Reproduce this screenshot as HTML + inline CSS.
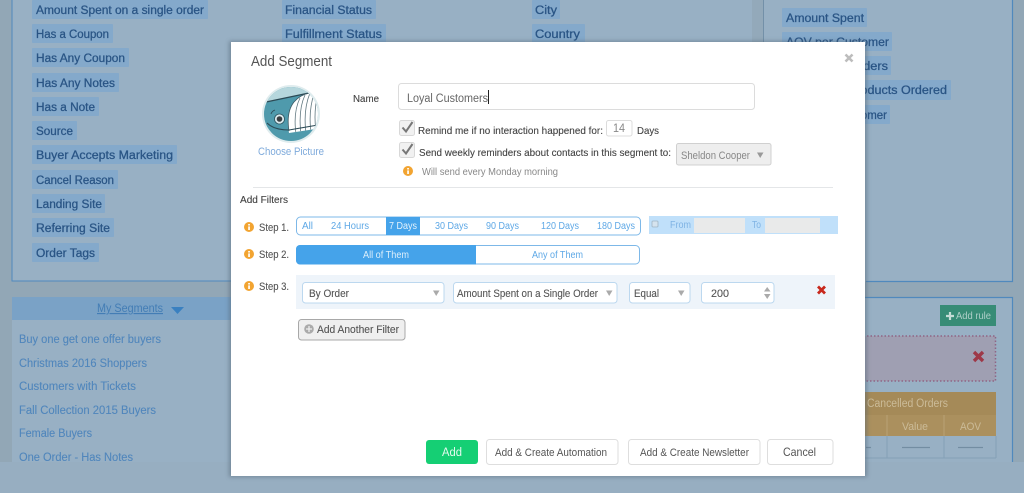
<!DOCTYPE html>
<html>
<head>
<meta charset="utf-8">
<style>
html,body{margin:0;padding:0;width:1024px;height:493px;overflow:hidden;background:#97aec1}
svg{display:block;filter:blur(.3px)}
text{font-family:"Liberation Sans",sans-serif;font-size:11px;fill:#555;white-space:pre}
.tag{fill:#84a9cb}
.tt{fill:#2a5585;font-size:11.5px;stroke:#2a5585;stroke-width:.28}
.seg{fill:#5086bc;font-size:11.500px;stroke:#5086bc;stroke-width:.1}
.b{fill:#5ea8e6;font-size:10px}
.d{fill:#444;font-size:10.5px;stroke:#444;stroke-width:.12}
.dk{fill:#555;font-size:11px;stroke:#555;stroke-width:.12}
</style>
</head>
<body>
<svg width="1024" height="493" viewBox="0 0 1024 493" xmlns="http://www.w3.org/2000/svg">
<defs>
<filter id="sh" x="-5%" y="-5%" width="110%" height="110%"><feGaussianBlur stdDeviation="2"/></filter>
<clipPath id="cc"><circle cx="291" cy="114" r="27"/></clipPath>
<clipPath id="wh"><path d="M289 133Q286 112 294 102Q300 95 309 93L322 89V128Z"/></clipPath>
<clipPath id="lst"><rect x="0" y="297" width="231" height="165"/></clipPath>
<g id="info"><circle r="5" fill="#f2a431"/><rect x="-.8" y="-.6" width="1.7" height="3.6" fill="#fff"/><rect x="-.8" y="-3" width="1.7" height="1.5" fill="#fff"/></g>
</defs>

<!-- page background -->
<rect width="1024" height="493" fill="#97aec1"/>
<rect x="0" y="0" width="1024" height="462" fill="#92a7b6"/>

<!-- top-left panel -->
<rect x="12" y="-3" width="751" height="284" fill="#98b0c4" stroke="#5089bd" stroke-width="1"/>
<!-- top-right panel -->
<rect x="763" y="-3" width="249" height="284" fill="#98b0c4"/>
<path d="M763.500 0V42" stroke="#7390a8" stroke-width="1"/>
<path d="M866 281.500H1012.500V0" fill="none" stroke="#5089bd" stroke-width="1.200"/>
<rect x="752" y="0" width="11" height="42" fill="#93a9ba"/>

<!-- left tags -->
<rect class="tag" x="32" y="0" width="176" height="19" rx="1"/><text class="tt" x="36" y="14" textLength="168" lengthAdjust="spacingAndGlyphs">Amount Spent on a single order</text>
<rect class="tag" x="32" y="24" width="81" height="19" rx="1"/><text class="tt" x="36" y="38" textLength="73" lengthAdjust="spacingAndGlyphs">Has a Coupon</text>
<rect class="tag" x="32" y="48" width="97" height="19" rx="1"/><text class="tt" x="36" y="62" textLength="89" lengthAdjust="spacingAndGlyphs">Has Any Coupon</text>
<rect class="tag" x="32" y="73" width="87" height="19" rx="1"/><text class="tt" x="36" y="87" textLength="79" lengthAdjust="spacingAndGlyphs">Has Any Notes</text>
<rect class="tag" x="32" y="97" width="67" height="19" rx="1"/><text class="tt" x="36" y="111" textLength="59" lengthAdjust="spacingAndGlyphs">Has a Note</text>
<rect class="tag" x="32" y="121" width="45" height="19" rx="1"/><text class="tt" x="36" y="135" textLength="37" lengthAdjust="spacingAndGlyphs">Source</text>
<rect class="tag" x="32" y="145" width="145" height="19" rx="1"/><text class="tt" x="36" y="159" textLength="137" lengthAdjust="spacingAndGlyphs">Buyer Accepts Marketing</text>
<rect class="tag" x="32" y="170" width="86" height="19" rx="1"/><text class="tt" x="36" y="184" textLength="78" lengthAdjust="spacingAndGlyphs">Cancel Reason</text>
<rect class="tag" x="32" y="194" width="73" height="19" rx="1"/><text class="tt" x="36" y="208" textLength="66" lengthAdjust="spacingAndGlyphs">Landing Site</text>
<rect class="tag" x="32" y="218" width="82" height="19" rx="1"/><text class="tt" x="36" y="232" textLength="74" lengthAdjust="spacingAndGlyphs">Referring Site</text>
<rect class="tag" x="32" y="243" width="67" height="19" rx="1"/><text class="tt" x="36" y="257" textLength="59" lengthAdjust="spacingAndGlyphs">Order Tags</text>

<rect class="tag" x="282" y="0" width="94" height="19" rx="1"/><text class="tt" x="285" y="14" textLength="87" lengthAdjust="spacingAndGlyphs">Financial Status</text>
<rect class="tag" x="282" y="24" width="104" height="19" rx="1"/><text class="tt" x="285" y="38" textLength="97" lengthAdjust="spacingAndGlyphs">Fulfillment Status</text>
<rect class="tag" x="532" y="0" width="28" height="19" rx="1"/><text class="tt" x="535" y="14" textLength="22" lengthAdjust="spacingAndGlyphs">City</text>
<rect class="tag" x="532" y="24" width="53" height="19" rx="1"/><text class="tt" x="535" y="38" textLength="45" lengthAdjust="spacingAndGlyphs">Country</text>

<!-- right tags -->
<rect class="tag" x="782" y="8" width="85" height="19" rx="1"/><text class="tt" x="786" y="22" textLength="78" lengthAdjust="spacingAndGlyphs">Amount Spent</text>
<rect class="tag" x="782" y="32" width="110" height="19" rx="1"/><text class="tt" x="786" y="46" textLength="103" lengthAdjust="spacingAndGlyphs">AOV per Customer</text>
<rect class="tag" x="782" y="56" width="109" height="19" rx="1"/><text class="tt" x="786" y="70" textLength="102" lengthAdjust="spacingAndGlyphs">Number of Orders</text>
<rect class="tag" x="782" y="80" width="169" height="20" rx="1"/><text class="tt" x="786" y="94" textLength="161" lengthAdjust="spacingAndGlyphs">Number of Products Ordered</text>
<rect class="tag" x="782" y="105" width="108" height="19" rx="1"/><text class="tt" x="786" y="119" textLength="101" lengthAdjust="spacingAndGlyphs">Value per Customer</text>

<!-- My Segments panel -->
<rect x="12" y="297" width="230" height="165" fill="#98b0c4"/>
<rect x="12" y="297" width="230" height="23" fill="#7aa2c6"/>
<text x="97" y="312" textLength="66" lengthAdjust="spacingAndGlyphs" style="fill:#437db5;font-size:11.500px;text-decoration:underline">My Segments</text>
<path d="M171 307H184L177.500 314Z" fill="#3a80c0"/>
<g clip-path="url(#lst)">
<text class="seg" x="19" y="343" textLength="142" lengthAdjust="spacingAndGlyphs">Buy one get one offer buyers</text>
<text class="seg" x="19" y="367" textLength="128" lengthAdjust="spacingAndGlyphs">Christmas 2016 Shoppers</text>
<text class="seg" x="19" y="390" textLength="117" lengthAdjust="spacingAndGlyphs">Customers with Tickets</text>
<text class="seg" x="19" y="414" textLength="137" lengthAdjust="spacingAndGlyphs">Fall Collection 2015 Buyers</text>
<text class="seg" x="19" y="437" textLength="73" lengthAdjust="spacingAndGlyphs">Female Buyers</text>
<text class="seg" x="19" y="461" textLength="114" lengthAdjust="spacingAndGlyphs">One Order - Has Notes</text>
</g>

<!-- bottom right panel -->
<rect x="860" y="297" width="152" height="165" fill="#98b0c4"/>
<path d="M860 297.500H1012.500V462" fill="none" stroke="#5089bd" stroke-width="1.200"/>
<rect x="940" y="305" width="56" height="21" fill="#378c76"/>
<path d="M950 312V320M946 316H954" stroke="#c5dcd6" stroke-width="2.200"/>
<text x="956" y="319" textLength="35" lengthAdjust="spacingAndGlyphs" style="fill:#aecfc8;font-size:10.500px">Add rule</text>
<rect x="860" y="336" width="135.500" height="45" fill="#9f9fb2" stroke="#8f6585" stroke-width="1.500" stroke-dasharray="1.500 2"/>
<path d="M974 352L983 361M983 352L974 361" stroke="#9e3848" stroke-width="3.400"/>
<rect x="860" y="392" width="136" height="23" fill="#a58a58"/>
<rect x="860" y="415" width="136" height="21" fill="#ab905e"/>
<rect x="860" y="436" width="136" height="22" fill="#98b0c4"/>
<path d="M887 436V458M944 436V458M996 436V458M860 458H996" stroke="#84a0b6" stroke-width="1" fill="none"/>
<path d="M887 415V436M944 415V436" stroke="#b8a277" stroke-width="1"/>
<text x="867" y="407" textLength="81" lengthAdjust="spacingAndGlyphs" style="fill:#cbbb98;font-size:11.500px">Cancelled Orders</text>
<text x="902" y="430" textLength="26" lengthAdjust="spacingAndGlyphs" style="fill:#cbbb98;font-size:11px">Value</text>
<text x="960" y="430" textLength="21" lengthAdjust="spacingAndGlyphs" style="fill:#cbbb98;font-size:11px">AOV</text>
<path d="M866 447.500H871M902 447.500H930M958 447.500H983" stroke="#738da2" stroke-width="1.300"/>

<!-- page bottom strip -->
<rect x="0" y="462" width="1024" height="31" fill="#97aec1"/>

<!-- modal -->
<rect x="229" y="41" width="638" height="436" fill="#4f6272" opacity=".5" filter="url(#sh)"/>
<rect x="231" y="42" width="634" height="434" fill="#fff"/>
<text x="251" y="66" textLength="81" lengthAdjust="spacingAndGlyphs" style="fill:#555;font-size:14.500px">Add Segment</text>
<path d="M845.500 54.500L852.500 61.500M852.500 54.500L845.500 61.500" stroke="#bdbdbd" stroke-width="2.600"/>

<!-- picture -->
<circle cx="291" cy="114" r="29" fill="#dfecee"/>
<circle cx="291" cy="114" r="27" fill="#4f9aac"/>
<g clip-path="url(#cc)">
<path d="M262 84H322V89L309 93L266 102Z" fill="#b6d7dd"/>
<path d="M289 133Q286 112 294 102Q300 95 309 93L322 89V128Z" fill="#fff"/>
<g clip-path="url(#wh)" stroke="#60777f" stroke-width=".8" fill="none">
<path d="M296 134Q293 112 300 98"/>
<path d="M301 134Q298 110 305 95"/>
<path d="M306 133Q303 110 310 93"/>
<path d="M311 132Q308 110 315 91"/>
<path d="M316 131Q313 110 319 90"/>
</g>
<path d="M266 102L309 93" stroke="#2c4a55" stroke-width="1.400" fill="none"/>
<path d="M267 123Q274 130 289 130L318 125" stroke="#2c4a55" stroke-width="1.100" fill="none"/>
<path d="M289 131Q286 112 294 102Q300 95 309 93" stroke="#3d5a64" stroke-width=".8" fill="none"/>
</g>
<circle cx="279.500" cy="119" r="5" fill="#dcebee" stroke="#2c5560" stroke-width=".8"/>
<circle cx="279.500" cy="119" r="2.800" fill="#3a3f42"/>
<path d="M271 114Q272 111 275 110" stroke="#2c4a55" stroke-width=".9" fill="none"/>
<text x="258" y="155" textLength="66" lengthAdjust="spacingAndGlyphs" style="fill:#7eaadb;font-size:11px">Choose Picture</text>

<!-- name -->
<text x="353" y="102" textLength="26" lengthAdjust="spacingAndGlyphs" class="d">Name</text>
<rect x="398.500" y="83.500" width="356" height="26" rx="3" fill="#fff" stroke="#dcdcdc"/>
<text x="407" y="102" textLength="81" lengthAdjust="spacingAndGlyphs" style="fill:#666;font-size:11.500px">Loyal Customers</text>
<rect x="488" y="90" width="1" height="14" fill="#222"/>

<!-- reminders -->
<rect x="399.500" y="120.500" width="15" height="15" rx="2" fill="#f1f1f1" stroke="#d8d8d8"/>
<path d="M402.500 127.500L406 131.500L412.500 122" stroke="#777" stroke-width="2" fill="none"/>
<text x="418" y="134" textLength="185" lengthAdjust="spacingAndGlyphs" class="d">Remind me if no interaction happened for:</text>
<rect x="606.500" y="120.500" width="25.500" height="15.500" rx="2" fill="#fff" stroke="#dcdcdc"/>
<text x="613" y="132" textLength="12" lengthAdjust="spacingAndGlyphs" style="fill:#888;font-size:11.500px">14</text>
<text x="637" y="134" textLength="22" lengthAdjust="spacingAndGlyphs" class="d">Days</text>

<rect x="399.500" y="142.500" width="15" height="15" rx="2" fill="#f1f1f1" stroke="#d8d8d8"/>
<path d="M402.500 149.500L406 153.500L412.500 144" stroke="#777" stroke-width="2" fill="none"/>
<text x="419" y="156" textLength="252" lengthAdjust="spacingAndGlyphs" class="d">Send weekly reminders about contacts in this segment to:</text>
<rect x="676.500" y="143.500" width="94.500" height="21.500" rx="2" fill="#eee" stroke="#d0d0d0"/>
<text x="681" y="159" textLength="69" lengthAdjust="spacingAndGlyphs" style="fill:#888;font-size:11px">Sheldon Cooper</text>
<path d="M757 152.500H763.500L760.200 158Z" fill="#999"/>
<use href="#info" x="408" y="171"/>
<text x="422" y="175" textLength="136" lengthAdjust="spacingAndGlyphs" style="fill:#888;font-size:10.500px">Will send every Monday morning</text>
<rect x="253" y="187" width="580" height="1" fill="#e4e6e8"/>

<text x="240" y="203" textLength="48" lengthAdjust="spacingAndGlyphs" class="d">Add Filters</text>

<!-- step 1 -->
<use href="#info" x="249" y="227"/>
<text x="259" y="231" textLength="30" lengthAdjust="spacingAndGlyphs" class="dk">Step 1.</text>
<rect x="296.500" y="217" width="344" height="18" rx="4" fill="#fff" stroke="#7db8e8"/>
<rect x="386" y="217" width="34" height="18" fill="#45a3ea"/>
<text class="b" x="302" y="229" textLength="11" lengthAdjust="spacingAndGlyphs">All</text>
<text class="b" x="331" y="229" textLength="38" lengthAdjust="spacingAndGlyphs">24 Hours</text>
<text class="b" x="389" y="229" textLength="28" lengthAdjust="spacingAndGlyphs" style="fill:#e4f2fc">7 Days</text>
<text class="b" x="435" y="229" textLength="33" lengthAdjust="spacingAndGlyphs">30 Days</text>
<text class="b" x="486" y="229" textLength="33" lengthAdjust="spacingAndGlyphs">90 Days</text>
<text class="b" x="541" y="229" textLength="38" lengthAdjust="spacingAndGlyphs">120 Days</text>
<text class="b" x="597" y="229" textLength="38" lengthAdjust="spacingAndGlyphs">180 Days</text>
<rect x="649" y="216" width="189" height="18" fill="#c0e0fa"/>
<rect x="652" y="221" width="6" height="6" rx="1" fill="#d5e3ee" stroke="#9fb4c4" stroke-width=".8"/>
<text x="670" y="228" textLength="21" lengthAdjust="spacingAndGlyphs" style="fill:#7fb3e4;font-size:10px">From</text>
<rect x="694" y="218" width="51" height="15" fill="#e9eaea"/>
<text x="752" y="228" textLength="9" lengthAdjust="spacingAndGlyphs" style="fill:#7fb3e4;font-size:10px">To</text>
<rect x="765" y="218" width="55" height="15" fill="#e9eaea"/>

<!-- step 2 -->
<use href="#info" x="249" y="254"/>
<text x="259" y="258" textLength="30" lengthAdjust="spacingAndGlyphs" class="dk">Step 2.</text>
<rect x="296.500" y="245.500" width="343" height="18.500" rx="4" fill="#fff" stroke="#7db8e8"/>
<path d="M476 245H300a4 4 0 0 0-4 4V260.500a4 4 0 0 0 4 4H476Z" fill="#45a3ea"/>
<text x="363" y="258" textLength="46" lengthAdjust="spacingAndGlyphs" style="fill:#dceefb;font-size:10px">All of Them</text>
<text class="b" x="532" y="258" textLength="51" lengthAdjust="spacingAndGlyphs">Any of Them</text>

<!-- step 3 -->
<use href="#info" x="249" y="286"/>
<text x="259" y="290" textLength="30" lengthAdjust="spacingAndGlyphs" class="dk">Step 3.</text>
<rect x="296" y="275" width="539" height="34" fill="#eef4fa"/>
<rect x="302.500" y="282.500" width="141.500" height="20.500" rx="3" fill="#fff" stroke="#bcd8ef"/>
<text x="309" y="297" textLength="40" lengthAdjust="spacingAndGlyphs" class="dk">By Order</text>
<path d="M433 290.500H439.500L436.200 296Z" fill="#aaa"/>
<rect x="453.500" y="282.500" width="163.500" height="20.500" rx="3" fill="#fff" stroke="#bcd8ef"/>
<text x="457" y="297" textLength="141" lengthAdjust="spacingAndGlyphs" class="dk">Amount Spent on a Single Order</text>
<path d="M606 290.500H612.500L609.200 296Z" fill="#aaa"/>
<rect x="629.500" y="282.500" width="60.500" height="20.500" rx="3" fill="#fff" stroke="#bcd8ef"/>
<text x="634" y="297" textLength="25" lengthAdjust="spacingAndGlyphs" class="dk">Equal</text>
<path d="M678 290.500H684.500L681.200 296Z" fill="#aaa"/>
<rect x="701.500" y="282.500" width="72.500" height="20.500" rx="3" fill="#fff" stroke="#bcd8ef"/>
<text x="711" y="297" textLength="18" lengthAdjust="spacingAndGlyphs" class="dk">200</text>
<path d="M764 291.500L767.200 287L770.500 291.500ZM764 294L767.200 299L770.500 294Z" fill="#aaa"/>
<path d="M818 286.500L825 293.500M825 286.500L818 293.500" stroke="#c8281c" stroke-width="2.800"/>

<!-- add another -->
<rect x="298.500" y="319.500" width="106.500" height="20.500" rx="3" fill="#efefef" stroke="#a8a8a8"/>
<circle cx="309" cy="329" r="4.800" fill="#aaa"/>
<path d="M309 326V332M306 329H312" stroke="#eee" stroke-width="1.300"/>
<text x="317" y="333" textLength="82" lengthAdjust="spacingAndGlyphs" style="fill:#555;font-size:11px;stroke:#555;stroke-width:.12">Add Another Filter</text>

<!-- footer buttons -->
<rect x="426" y="440" width="52" height="24" rx="3" fill="#15cf74"/>
<text x="442" y="456" textLength="20" lengthAdjust="spacingAndGlyphs" style="fill:#e4f9ee;font-size:11.500px">Add</text>
<rect x="486.500" y="439.500" width="131.500" height="25" rx="3" fill="#fff" stroke="#dedede"/>
<text x="495" y="456" textLength="112" lengthAdjust="spacingAndGlyphs" style="fill:#555;font-size:11px">Add &amp; Create Automation</text>
<rect x="628.500" y="439.500" width="131.500" height="25" rx="3" fill="#fff" stroke="#dedede"/>
<text x="640" y="456" textLength="109" lengthAdjust="spacingAndGlyphs" style="fill:#555;font-size:11px">Add &amp; Create Newsletter</text>
<rect x="767.500" y="439.500" width="65.500" height="25" rx="3" fill="#fff" stroke="#dedede"/>
<text x="783" y="456" textLength="33" lengthAdjust="spacingAndGlyphs" style="fill:#555;font-size:12px">Cancel</text>
</svg>
</body>
</html>
